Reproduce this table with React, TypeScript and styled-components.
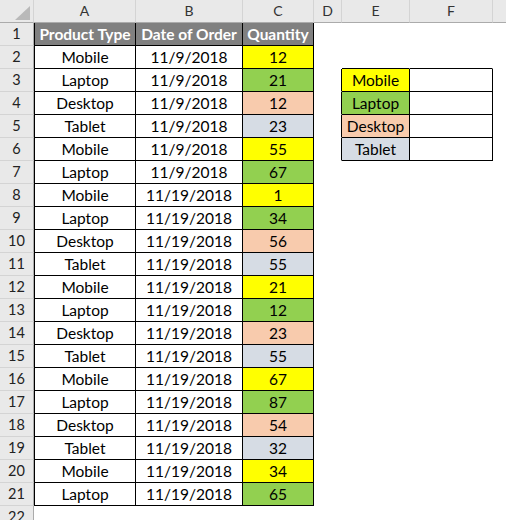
import React from "react";
import styled, { createGlobalStyle } from "styled-components";

const Global = createGlobalStyle`
  html, body { margin: 0; padding: 0; background: #fff; overflow: hidden; }
`;

const COLORS: Record<string, string> = {
  Mobile: "#ffff00",
  Laptop: "#92d050",
  Desktop: "#f8cbad",
  Tablet: "#d6dce4",
};

const DATA: [string, string, number][] = [
  ["Mobile", "11/9/2018", 12],
  ["Laptop", "11/9/2018", 21],
  ["Desktop", "11/9/2018", 12],
  ["Tablet", "11/9/2018", 23],
  ["Mobile", "11/9/2018", 55],
  ["Laptop", "11/9/2018", 67],
  ["Mobile", "11/19/2018", 1],
  ["Laptop", "11/19/2018", 34],
  ["Desktop", "11/19/2018", 56],
  ["Tablet", "11/19/2018", 55],
  ["Mobile", "11/19/2018", 21],
  ["Laptop", "11/19/2018", 12],
  ["Desktop", "11/19/2018", 23],
  ["Tablet", "11/19/2018", 55],
  ["Mobile", "11/19/2018", 67],
  ["Laptop", "11/19/2018", 87],
  ["Desktop", "11/19/2018", 54],
  ["Tablet", "11/19/2018", 32],
  ["Mobile", "11/19/2018", 34],
  ["Laptop", "11/19/2018", 65],
];

const LEGEND = ["Mobile", "Laptop", "Desktop", "Tablet"];
// the last column (G) is only partly in view, so its letter lies off-screen
const COLS = ["A", "B", "C", "D", "E", "F", ""];

const Sheet = styled.div`
  display: grid;
  grid-template-columns: 34px 102px 107px 71px 28px 68px 83px 1fr;
  grid-auto-rows: 23px;
  width: 506px;
  height: 520px;
  overflow: hidden;
  font-family: Lato, "Open Sans", sans-serif;
  background: #fff;
`;

const Corner = styled.div`
  box-sizing: border-box;
  background: #e9e9e9;
  border-right: 1px solid #d4d4d4;
  border-bottom: 1px solid #ababab;
  display: flex;
  justify-content: flex-end;
  align-items: flex-end;
  padding: 0 3px 2px 0;
`;

const ColHead = styled.div<{ $last?: boolean }>`
  box-sizing: border-box;
  background: #e9e9e9;
  border-right: ${(p) => (p.$last ? "none" : "1px solid #d4d4d4")};
  border-bottom: 1px solid #ababab;
  display: flex;
  align-items: center;
  justify-content: center;
  font-size: 14px;
  line-height: 22px;
  color: #333;
`;

const RowHead = styled.div`
  box-sizing: border-box;
  background: #e9e9e9;
  border-right: 1px solid #ababab;
  border-bottom: 1px solid #d4d4d4;
  display: flex;
  align-items: center;
  justify-content: center;
  font-size: 14.5px;
  line-height: 22px;
  color: #222;
`;

const Cell = styled.div<{
  $bg?: string;
  $r?: string;
  $b?: string;
  $l?: string;
  $bold?: boolean;
  $fg?: string;
}>`
  box-sizing: border-box;
  background: ${(p) => p.$bg ?? "#fff"};
  border-right: 1px solid ${(p) => p.$r ?? "transparent"};
  border-bottom: 1px solid ${(p) => p.$b ?? "transparent"};
  border-left: ${(p) => (p.$l ? `1px solid ${p.$l}` : "none")};
  display: flex;
  align-items: center;
  justify-content: center;
  font-size: 15.5px;
  line-height: 22px;
  font-weight: ${(p) => (p.$bold ? 700 : 400)};
  color: ${(p) => p.$fg ?? "#000"};
  white-space: nowrap;
  overflow: hidden;
`;

const K = "#000";

function legendFor(row: number) {
  const idx = row - 3;
  return idx >= 0 && idx < LEGEND.length ? LEGEND[idx] : null;
}

export default function App() {
  const rows: React.ReactNode[] = [];

  for (let r = 1; r <= 22; r++) {
    rows.push(<RowHead key={`h${r}`}>{r}</RowHead>);

    if (r === 1) {
      rows.push(
        <Cell key="a1" $bg="#808080" $fg="#fff" $bold $r={K} $b={K} $l={K}>
          Product Type
        </Cell>,
        <Cell key="b1" $bg="#808080" $fg="#fff" $bold $r={K} $b={K}>
          Date of Order
        </Cell>,
        <Cell key="c1" $bg="#808080" $fg="#fff" $bold $r={K} $b={K}>
          Quantity
        </Cell>
      );
    } else if (r <= 21) {
      const [type, date, qty] = DATA[r - 2];
      rows.push(
        <Cell key={`a${r}`} $r={K} $b={K} $l={K}>
          {type}
        </Cell>,
        <Cell key={`b${r}`} $r={K} $b={K}>
          {date}
        </Cell>,
        <Cell key={`c${r}`} $bg={COLORS[type]} $r={K} $b={K}>
          {qty}
        </Cell>
      );
    } else {
      rows.push(<Cell key={`a${r}`} />, <Cell key={`b${r}`} />, <Cell key={`c${r}`} />);
    }

    const leg = legendFor(r);
    const topEdge = r === 2;
    rows.push(<Cell key={`d${r}`} $r={leg ? K : undefined} />);
    if (leg) {
      rows.push(
        <Cell key={`e${r}`} $bg={COLORS[leg]} $r={K} $b={K}>
          {leg}
        </Cell>,
        <Cell key={`f${r}`} $r={K} $b={K} />
      );
    } else {
      rows.push(
        <Cell key={`e${r}`} $b={topEdge ? K : undefined} />,
        <Cell key={`f${r}`} $b={topEdge ? K : undefined} />
      );
    }
    rows.push(<Cell key={`g${r}`} />);
  }

  return (
    <>
      <Global />
      <Sheet>
        <Corner>
          <svg width="15" height="14" viewBox="0 0 15 14">
            <polygon points="15,0 15,14 0,14" fill="#b9b9b9" />
          </svg>
        </Corner>
        {COLS.map((c, i) => (
          <ColHead key={`col${i}`} $last={i === COLS.length - 1}>
            {c}
          </ColHead>
        ))}
        {rows}
      </Sheet>
    </>
  );
}
